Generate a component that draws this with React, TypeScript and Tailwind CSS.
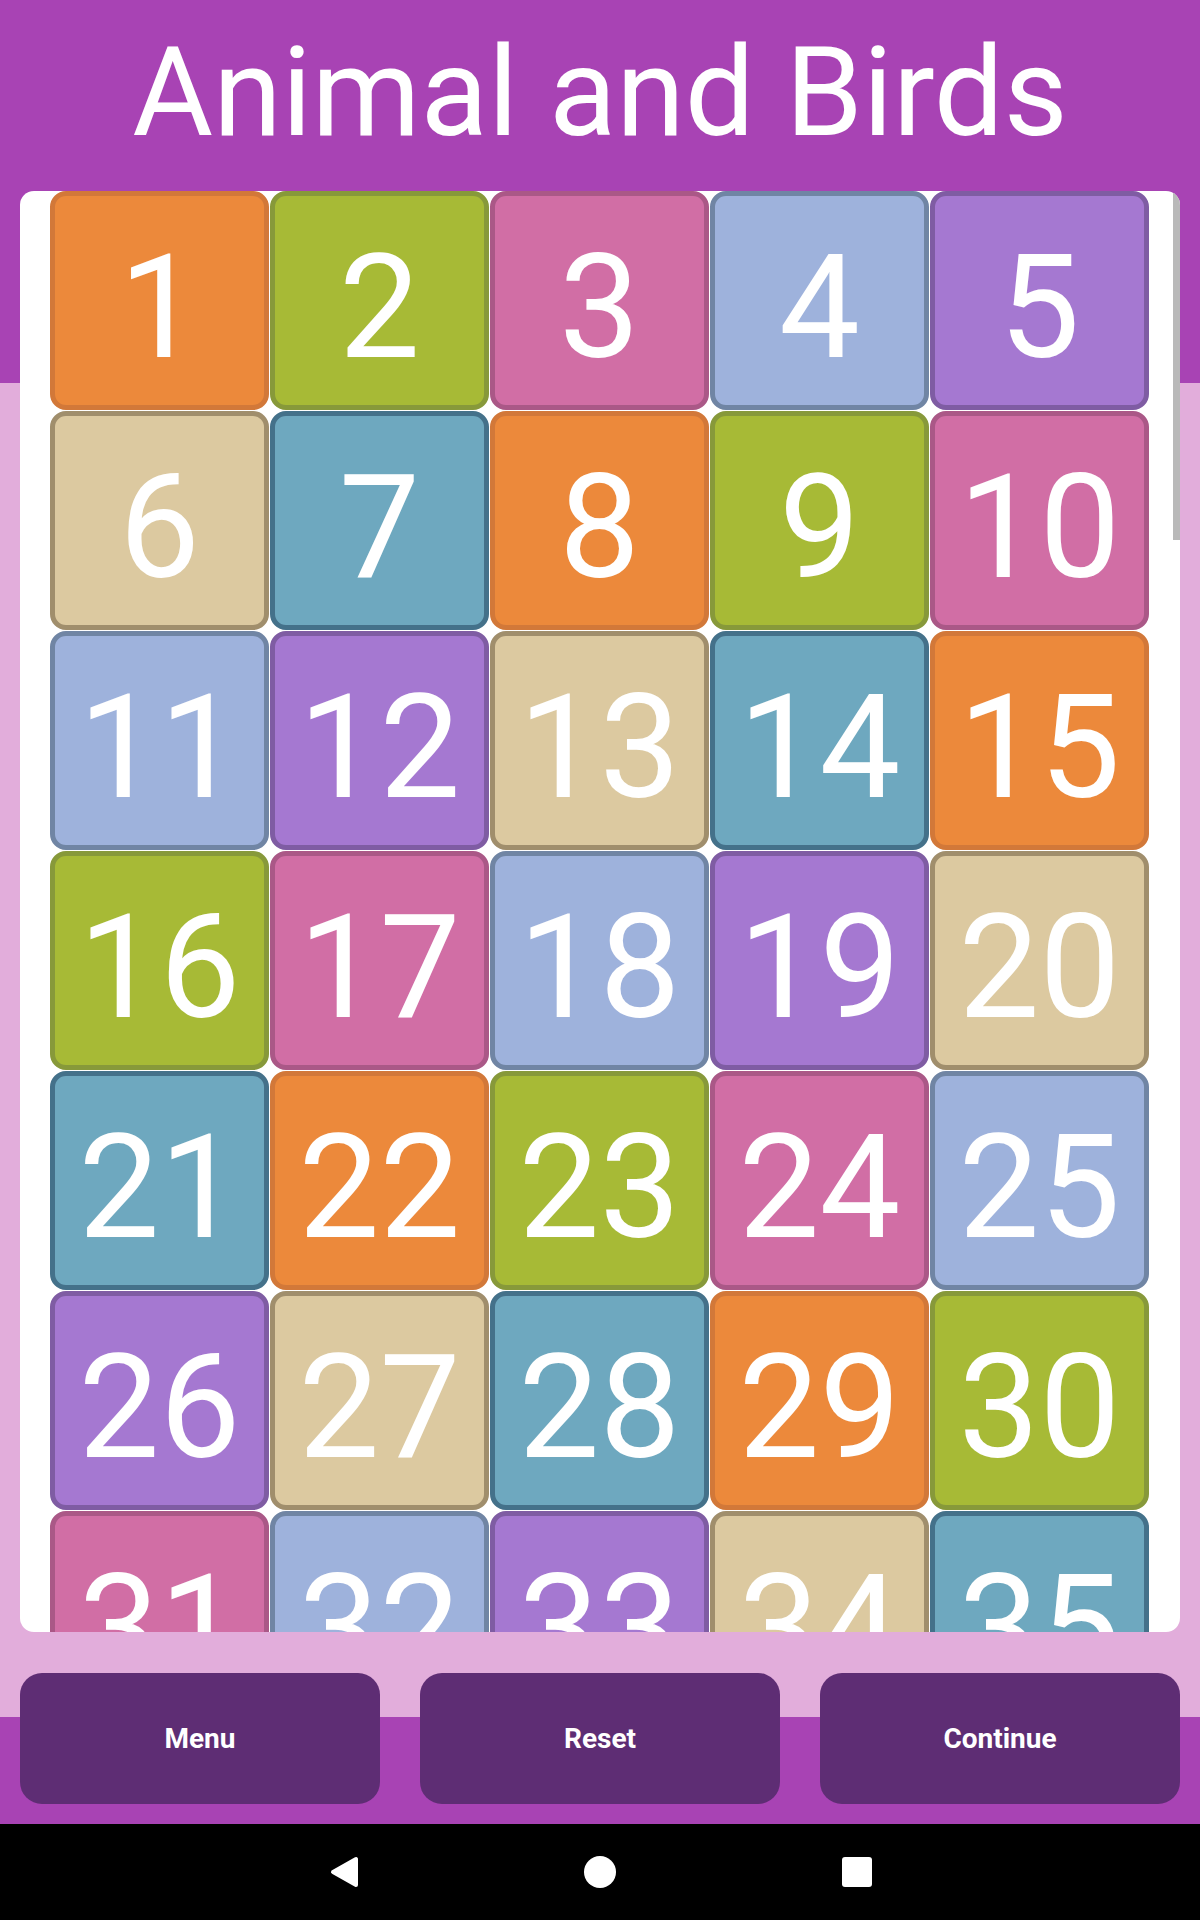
const palette = [
  { bg: 'bg-[#ec893b]', border: 'border-[#d27839]' },
  { bg: 'bg-[#a7ba36]', border: 'border-[#87993a]' },
  { bg: 'bg-[#d16ea5]', border: 'border-[#aa5887]' },
  { bg: 'bg-[#9eb2dc]', border: 'border-[#7085a4]' },
  { bg: 'bg-[#a578d1]', border: 'border-[#7f5ca3]' },
  { bg: 'bg-[#dcc9a0]', border: 'border-[#a08e6c]' },
  { bg: 'bg-[#6ea8bf]', border: 'border-[#44718a]' },
];

const tiles = Array.from({ length: 35 }, (_, i) => i + 1);

export default function App() {
  return (
    <div className="w-[1200px] h-[1920px] flex flex-col font-['Roboto',sans-serif] bg-[linear-gradient(to_bottom,#a843b4_383px,#e2addb_383px,#e2addb_1717px,#a843b4_1717px)]">
      {/* Title */}
      <div className="h-[191px] pt-[31px] text-center text-white text-[124px] leading-none">
        Animal and Birds
      </div>

      {/* Board */}
      <div className="relative mx-[20px] h-[1441px] bg-white rounded-[14px] overflow-hidden pl-[30px]">
        <div className="grid grid-cols-[repeat(5,219px)] gap-px">
          {tiles.map((n) => {
            const c = palette[(n - 1) % palette.length];
            return (
              <div
                key={n}
                className={`w-[219px] h-[219px] border-[5px] rounded-[16px] flex items-center justify-center pt-[14px] text-white text-[144px] leading-none ${c.bg} ${c.border}`}
              >
                {n}
              </div>
            );
          })}
        </div>
        <div className="absolute right-0 top-0 w-[7px] h-[349px] bg-[#b9b9b9]" />
      </div>

      {/* Buttons */}
      <div className="mt-[41px] px-[20px] flex gap-[40px]">
        {['Menu', 'Reset', 'Continue'].map((label) => (
          <button
            key={label}
            className="flex-1 h-[131px] rounded-[22px] bg-[#5e2d74] text-white font-bold text-[28px] flex items-center justify-center"
          >
            {label}
          </button>
        ))}
      </div>

      {/* Android nav bar */}
      <div className="mt-auto h-[96px] bg-black flex items-center justify-center gap-[226px] pl-[1px]">
        <svg width="28" height="32" viewBox="0 0 28 32">
          <polygon points="3,16 26,3 26,29" fill="white" stroke="white" strokeWidth="4" strokeLinejoin="round" />
        </svg>
        <div className="w-[32px] h-[32px] rounded-full bg-white" />
        <div className="w-[30px] h-[30px] rounded-[3px] bg-white" />
      </div>
    </div>
  );
}
